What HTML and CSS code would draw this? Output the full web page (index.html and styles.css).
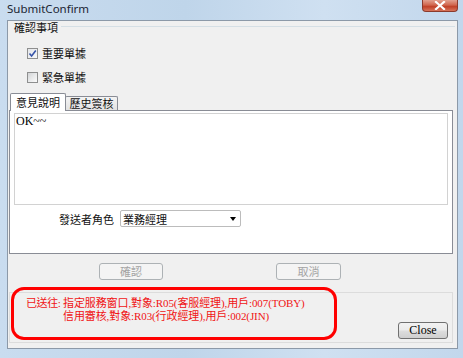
FILE: index.html
```html
<!DOCTYPE html>
<html>
<head>
<meta charset="utf-8">
<link rel="stylesheet" href="styles.css">
</head>
<body>
<div class="window">
  <div class="titlebar">
    <span class="title">SubmitConfirm</span>
    <div class="close-x">
      <svg width="12" height="9" viewBox="0 0 12 9"><path d="M2 1 L10 8 M10 1 L2 8" stroke="#ffffff" stroke-width="2.2" stroke-linecap="square" fill="none"/></svg>
    </div>
  </div>
  <div class="client">
    <div class="group-head"><span class="group-title">確認事項</span><span class="group-line"></span></div>
    <div class="check-row first">
      <span class="cb checked"><svg width="9" height="9" viewBox="0 0 9 9"><path d="M1.5 4.5 L3.6 7 L7.8 1.5" stroke="#3553a8" stroke-width="1.6" fill="none"/></svg></span>
      <span class="cb-label">重要單據</span>
    </div>
    <div class="check-row second">
      <span class="cb"></span>
      <span class="cb-label">緊急單據</span>
    </div>
    <div class="tabs">
      <div class="tab active">意見說明</div>
      <div class="tab">歷史簽核</div>
    </div>
    <div class="tab-panel">
      <div class="memo">OK~~</div>
      <div class="role-row">
        <span class="role-label">發送者角色</span>
        <div class="combo"><span class="combo-text">業務經理</span><span class="arrow"></span></div>
      </div>
    </div>
    <div class="btn-row">
      <div class="btn disabled w64">確認</div>
      <div class="btn disabled w65">取消</div>
    </div>
    <div class="bottom-panel">
      <div class="msg">
        <span class="msg-label">已送往:</span>
        <div class="msg-lines">
          <div>指定服務窗口,對象:R05(客服經理),用戶:007(TOBY)</div>
          <div>信用審核,對象:R03(行政經理),用戶:002(JIN)</div>
        </div>
      </div>
      <div class="btn close-btn">Close</div>
    </div>
  </div>
</div>
<div class="annot"></div>
</body>
</html>
```
FILE: styles.css
```css
html, body {
  margin: 0;
  padding: 0;
}
body {
  width: 463px;
  height: 358px;
  overflow: hidden;
  position: relative;
  background: linear-gradient(to right, #c9dcef 0%, #bfd5ea 40%, #cfe0f1 70%, #c2d7ec 100%);
  font-family: "Liberation Serif", "Noto Sans CJK TC", serif;
  font-size: 11px;
  color: #111;
}
.window {
  box-sizing: border-box;
  width: 463px;
  height: 358px;
  padding-left: 7px;
}
.titlebar {
  height: 20px;
  display: flex;
  width: 451px;
}
.title {
  font-family: "Noto Sans", "Liberation Sans", sans-serif;
  font-size: 11.5px;
  line-height: 20px;
  color: #1b2533;
  margin-top: -1px;
}
.close-x {
  margin-left: auto;
  width: 36px;
  height: 12px;
  box-sizing: border-box;
  border: 1px solid #8b3a2c;
  border-top: 0;
  border-radius: 0 0 4px 4px;
  background: linear-gradient(to bottom, #e2a08f 0%, #d1674f 45%, #c14128 60%, #d7755c 100%);
  display: flex;
  align-items: center;
  justify-content: center;
}
.client {
  box-sizing: border-box;
  width: 451px;
  height: 329px;
  border: 1px solid #8c99a8;
  background: #f0f0f0;
}
.group-head {
  display: flex;
  height: 12px;
  margin-left: 6px;
}
.group-title {
  line-height: 12px;
  font-family: "Noto Sans CJK TC", sans-serif;
}
.group-line {
  flex: 1;
  height: 0;
  border-top: 1px solid #d5dfe5;
  margin-top: 5px;
  margin-left: 3px;
  margin-right: 2px;
}
.check-row {
  display: flex;
  align-items: center;
  height: 11px;
  margin-left: 19px;
  gap: 4px;
}
.check-row.first { margin-top: 15px; }
.check-row.second { margin-top: 13px; }
.cb {
  box-sizing: border-box;
  width: 11px;
  height: 11px;
  border: 1px solid #8e8f8f;
  background: linear-gradient(135deg, #d2d4d6 0%, #e8e9ea 50%, #fbfbfb 100%);
  display: flex;
  align-items: center;
  justify-content: center;
}
.cb.checked {
  background: linear-gradient(135deg, #e4e6ea 0%, #f6f7f8 100%);
}
.cb-label {
  font-family: "Noto Sans CJK TC", sans-serif;
  line-height: 11px;
}
.tabs {
  display: flex;
  align-items: flex-end;
  height: 18px;
  margin-top: 10px;
  margin-left: 2px;
  position: relative;
  z-index: 1;
}
.tab {
  box-sizing: border-box;
  font-family: "Noto Sans CJK TC", sans-serif;
  text-align: center;
  border: 1px solid #898c95;
  border-bottom: 0;
  border-radius: 2px 2px 0 0;
}
.tab.active {
  width: 56px;
  height: 18px;
  line-height: 17px;
  background: #ffffff;
}
.tab:not(.active) {
  width: 53px;
  height: 14px;
  line-height: 13px;
  margin-bottom: 1px;
  margin-left: -1px;
  background: linear-gradient(to bottom, #f4f4f4, #e2e2e2);
}
.tab-panel {
  box-sizing: border-box;
  width: 444px;
  height: 144px;
  margin-top: -1px;
  margin-left: 1px;
  border: 1px solid #898c95;
  background: #ffffff;
}
.memo {
  box-sizing: border-box;
  width: 434px;
  height: 92px;
  margin: 2px 0 0 4px;
  border: 1px solid #d2d2d2;
  padding: 1px 1px;
  font-size: 12px;
  line-height: 13px;
  color: #000;
}
.role-row {
  display: flex;
  align-items: center;
  margin-top: 5px;
}
.role-label {
  box-sizing: border-box;
  width: 110px;
  padding-right: 6px;
  text-align: right;
  font-family: "Noto Sans CJK TC", sans-serif;
}
.combo {
  box-sizing: border-box;
  width: 121px;
  height: 17px;
  border: 1px solid #bcbcbc;
  border-radius: 2px;
  background: #fff;
  display: flex;
  align-items: center;
  padding-left: 2px;
}
.combo-text {
  font-family: "Noto Sans CJK TC", sans-serif;
}
.arrow {
  margin-left: auto;
  margin-right: 4px;
  width: 0;
  height: 0;
  border-left: 3.5px solid transparent;
  border-right: 3.5px solid transparent;
  border-top: 4px solid #000;
}
.btn-row {
  display: flex;
  margin-top: 9px;
  padding-left: 91px;
  gap: 113px;
}
.btn {
  box-sizing: border-box;
  height: 17px;
  border-radius: 3px;
  text-align: center;
  line-height: 15px;
}
.btn.disabled {
  border: 1px solid #adb2b5;
  background: #f4f4f4;
  color: #a3a3a3;
  font-family: "Noto Sans CJK TC", sans-serif;
}
.w64 { width: 64px; }
.w65 { width: 65px; }
.bottom-panel {
  box-sizing: border-box;
  width: 444px;
  height: 51px;
  margin-top: 12px;
  margin-left: 1px;
  border: 1px solid #dcdcdc;
  display: flex;
  justify-content: space-between;
}
.msg {
  display: flex;
  padding: 4px 0 0 16px;
  color: #f01414;
  line-height: 13px;
  letter-spacing: -0.1px;
}
.msg-label {
  width: 37px;
  flex: none;
  letter-spacing: -0.4px;
}
.close-btn {
  align-self: flex-end;
  width: 50px;
  margin: 0 4px 3px 0;
  border: 1px solid #707070;
  background: linear-gradient(to bottom, #f2f2f2 0%, #ebebeb 48%, #dddddd 52%, #cfcfcf 100%);
  font-size: 12px;
  color: #000;
}
.annot {
  position: absolute;
  left: 11px;
  top: 287px;
  width: 326px;
  height: 53px;
  box-sizing: border-box;
  border: 3px solid #ff0000;
  border-radius: 13px;
}
```
